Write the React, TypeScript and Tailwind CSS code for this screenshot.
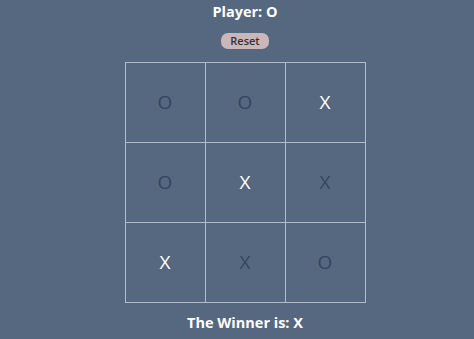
import React from "react";

const cells: { v: string; win: boolean }[] = [
  { v: "O", win: false },
  { v: "O", win: false },
  { v: "X", win: true },
  { v: "O", win: false },
  { v: "X", win: true },
  { v: "X", win: false },
  { v: "X", win: true },
  { v: "X", win: false },
  { v: "O", win: false },
];

export default function App() {
  return (
    <div
      className="w-[474px] h-[339px] bg-[#566880] pl-[16px] flex flex-col items-center overflow-hidden"
      style={{ fontFamily: '"Open Sans", "Noto Sans", sans-serif' }}
    >
      <div className="mt-[2px] h-[20px] leading-[20px] text-[14.5px] font-bold text-white">Player: O</div>
      <button className="mt-[11px] w-[48px] h-[16px] rounded-[7px] bg-[#cbb6b9] text-[11px] leading-[16px] font-semibold text-[#333]">
        Reset
      </button>
      <div className="mt-[13px] grid grid-cols-[80px_80px_80px] border-l border-t border-[#b4bcc6]">
        {cells.map((c, i) => (
          <div
            key={i}
            className={`w-[80px] h-[80px] border-r border-b border-[#b4bcc6] flex items-center justify-center text-[19px] font-normal ${
              c.win ? "text-white" : "text-[#34455c]"
            }`}
          >
            {c.v}
          </div>
        ))}
      </div>
      <div className="mt-[9px] h-[22px] leading-[22px] text-[14.5px] font-bold text-white">The Winner is: X</div>
    </div>
  );
}
